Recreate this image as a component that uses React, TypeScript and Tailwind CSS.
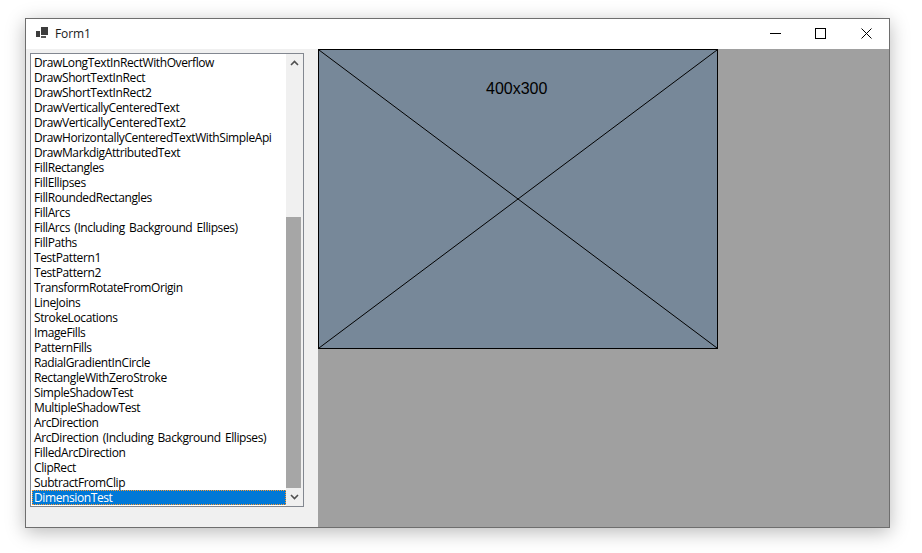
const items = [
  "DrawLongTextInRectWithOverflow","DrawShortTextInRect","DrawShortTextInRect2","DrawVerticallyCenteredText","DrawVerticallyCenteredText2","DrawHorizontallyCenteredTextWithSimpleApi","DrawMarkdigAttributedText","FillRectangles","FillEllipses","FillRoundedRectangles","FillArcs","FillArcs (Including Background Ellipses)","FillPaths","TestPattern1","TestPattern2","TransformRotateFromOrigin","LineJoins","StrokeLocations","ImageFills","PatternFills","RadialGradientInCircle","RectangleWithZeroStroke","SimpleShadowTest","MultipleShadowTest","ArcDirection","ArcDirection (Including Background Ellipses)","FilledArcDirection","ClipRect","SubtractFromClip",
];

export default function App() {
  return (
    <div className="w-[922px] h-[553px] bg-white pl-[25px] pt-[18px] overflow-hidden font-['Open_Sans','Noto_Sans',sans-serif]">
      <div className="w-[865px] h-[510px] border border-[#6e6e6e] flex flex-col shadow-[0_4px_18px_rgba(0,0,0,0.28)] bg-[#f0f0f0]">
        <div className="h-[30px] bg-white flex items-center shrink-0">
          <svg width="16" height="16" viewBox="0 0 16 16" className="ml-[8px] mr-[5px]">
            <rect x="7" y="1" width="7" height="8" fill="#3c3c3c" />
            <rect x="2" y="5" width="4" height="6" fill="#3c3c3c" />
            <rect x="7" y="10" width="5" height="2" fill="#555555" />
          </svg>
          <span className="text-[12px] text-[#1a1a1a] tracking-[-0.1px]">Form1</span>
          <div className="ml-auto flex items-start gap-[34px] pt-[9px] pr-[17px] h-[30px]">
            <svg width="11" height="11" viewBox="0 0 11 11"><path d="M0 5.5H11" stroke="#000" strokeWidth="1" /></svg>
            <svg width="11" height="11" viewBox="0 0 11 11"><rect x="0.5" y="0.5" width="10" height="10" fill="none" stroke="#000" strokeWidth="1" /></svg>
            <svg width="11" height="11" viewBox="0 0 11 11" className="ml-px"><path d="M0.5 0.5L10.5 10.5M10.5 0.5L0.5 10.5" stroke="#000" strokeWidth="1" /></svg>
          </div>
        </div>
        <div className="flex-1 flex min-h-0">
          <div className="w-[292px] shrink-0 pl-[4px] pt-[4px]">
            <div className="w-[274px] h-[454px] border border-[#828790] bg-white flex">
              <div className="flex-1 min-w-0 pt-px pl-px">
                {items.map((t) => (
                  <div key={t} className="h-[15px] leading-[15px] pl-[2px] text-[12px] text-black whitespace-nowrap overflow-hidden tracking-[-0.4px] [word-spacing:1.5px]">{t}</div>
                ))}
                <div className="h-[15px] leading-[13px] pl-[1px] text-[12px] text-white bg-[#0078d7] border border-dotted border-[#ff9a2e] tracking-[-0.4px] box-border">DimensionTest</div>
              </div>
              <div className="w-[17px] shrink-0 bg-[#f0f0f0] flex flex-col">
                <div className="h-[17px] flex items-center justify-center">
                  <svg width="9" height="6" viewBox="0 0 9 6"><path d="M1 5L4.5 1.5L8 5" fill="none" stroke="#505050" strokeWidth="1.6" /></svg>
                </div>
                <div className="h-[146px]" />
                <div className="h-[271px] w-[15px] bg-[#a6a6a6]" />
                <div className="h-[17px] flex items-center justify-center">
                  <svg width="9" height="6" viewBox="0 0 9 6"><path d="M1 1L4.5 4.5L8 1" fill="none" stroke="#505050" strokeWidth="1.6" /></svg>
                </div>
              </div>
            </div>
          </div>
          <div className="flex-1 bg-[#a0a0a0] min-w-0">
            <div className="relative w-[400px] h-[300px] bg-[#778899] border border-black">
              <svg className="absolute inset-0" width="398" height="298" viewBox="0 0 398 298">
                <path d="M0 0L398 298M398 0L0 298" stroke="#000" strokeWidth="1" fill="none" />
              </svg>
              <div className="relative pt-[28px] pl-[167px] text-[16px] leading-[22px] text-black font-['Liberation_Sans',sans-serif]">400x300</div>
            </div>
          </div>
        </div>
      </div>
    </div>
  );
}
